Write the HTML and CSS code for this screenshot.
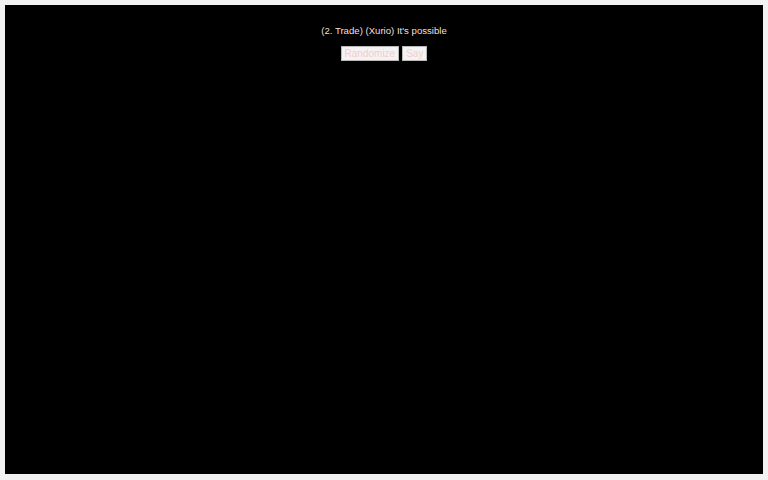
FILE: index.html
```html
<!DOCTYPE html>
<html>
<head>
<meta charset="utf-8">
<link rel="stylesheet" href="styles.css">
</head>
<body>
<div class="stage">
  <p class="line">(2. Trade) (Xurio) It's possible</p>
  <div class="controls">
    <button class="btn">Randomize</button>
    <button class="btn">Say</button>
  </div>
</div>
</body>
</html>
```
FILE: styles.css
```css
html, body {
  margin: 0;
  padding: 0;
  background: #f2f2f2;
}
body {
  padding: 5px;
  font-family: "Liberation Sans", Arial, sans-serif;
}
.stage {
  background: #000;
  height: 469px;
  box-sizing: border-box;
  padding-top: 20px;
  display: flex;
  flex-direction: column;
  align-items: center;
}
.line {
  margin: 0;
  color: #f7dede;
  font-size: 9.6px;
  line-height: 12px;
}
.controls {
  margin-top: 9px;
  display: flex;
  gap: 3px;
}
.btn {
  font-family: "Liberation Sans", Arial, sans-serif;
  font-size: 10px;
  line-height: 12px;
  color: #f6cccc;
  background: #f3f3f3;
  border: 1px solid #b8b8b8;
  padding: 0 3px;
  height: 15px;
  margin: 0;
}
```
